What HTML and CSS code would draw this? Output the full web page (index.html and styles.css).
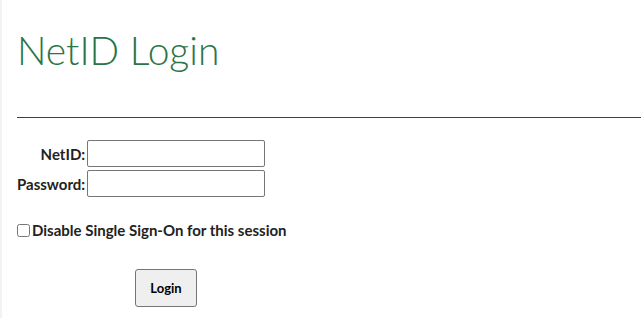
FILE: index.html
```html
<!DOCTYPE html>
<html lang="en">
<head>
    <meta charset="UTF-8">
    <title>NetID Login</title>
    <link rel="stylesheet" href="styles.css">
</head>
<body>
    <div class="page">
        <h1 class="page-title">NetID Login</h1>
        <hr class="rule">
        <form class="login-form">
            <table class="fields">
                <tr>
                    <td class="label"><label for="netid">NetID:</label></td>
                    <td><input type="text" id="netid"></td>
                </tr>
                <tr>
                    <td class="label"><label for="password">Password:</label></td>
                    <td><input type="password" id="password"></td>
                </tr>
            </table>
            <div class="sso">
                <input type="checkbox" id="nosso">
                <label for="nosso">Disable Single Sign-On for this session</label>
            </div>
            <div class="actions">
                <button type="submit" class="login-button">Login</button>
            </div>
        </form>
    </div>
</body>
</html>
```

FILE: styles.css
```css
body {
    margin: 0;
    font-family: Lato, "Liberation Sans", sans-serif;
    color: #222;
    background: #fff;
}
.page {
    border-left: 2px solid #f2f2f2;
    padding-left: 15px;
    min-height: 318px;
    box-sizing: border-box;
}
.page-title {
    margin: 0;
    padding-top: 26px;
    font-size: 39px;
    font-weight: 300;
    color: #2a7447;
    line-height: 48px;
}
.rule {
    margin: 43px 0 0 0;
    border: none;
    border-top: 1px solid #2f4a3c;
}
.login-form {
    margin-top: 22px;
    font-size: 15px;
    font-weight: bold;
}
.fields {
    border-collapse: collapse;
}
.fields td {
    padding: 0 0 3px 0;
}
.fields .label {
    text-align: right;
    padding-right: 2px;
}
.fields input {
    width: 178px;
    height: 27px;
    box-sizing: border-box;
    border: 1px solid #767676;
    border-radius: 2px;
    margin: 0;
    display: block;
}
.sso {
    margin-top: 21px;
    display: flex;
    align-items: center;
}
.sso input {
    margin: 0 2px 0 0;
    width: 13px;
    height: 13px;
}
.actions {
    margin-top: 30px;
    padding-left: 118px;
}
.login-button {
    width: 62px;
    height: 38px;
    font-family: Lato, "Liberation Sans", sans-serif;
    font-size: 13px;
    font-weight: bold;
    background: #efefef;
    border: 1px solid #767676;
    border-radius: 3px;
}
```
